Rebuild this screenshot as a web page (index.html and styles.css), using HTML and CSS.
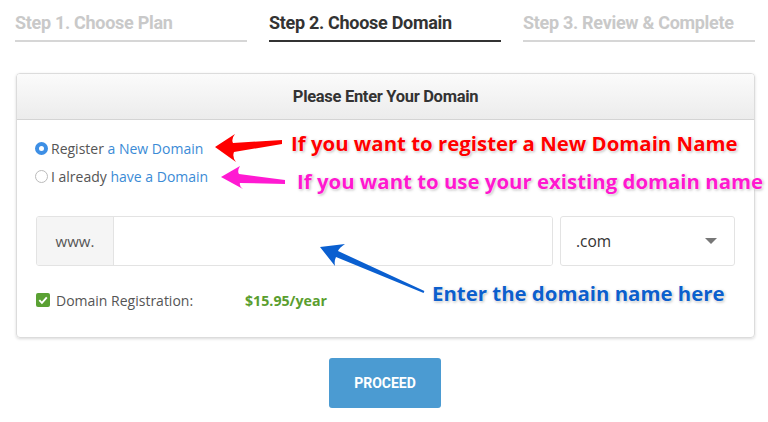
FILE: index.html
```html
<!DOCTYPE html>
<html>
<head>
<meta charset="utf-8">
<link rel="stylesheet" href="styles.css">
</head>
<body>
<div class="page">
  <div class="steps">
    <div class="step">Step 1. Choose Plan</div>
    <div class="step active">Step 2. Choose Domain</div>
    <div class="step">Step 3. Review &amp; Complete</div>
  </div>

  <div class="card">
    <div class="card-head">Please Enter Your Domain</div>
    <div class="card-body">
      <div class="options">
        <label class="opt"><span class="radio checked"></span>Register <span class="link">a New Domain</span></label>
        <label class="opt"><span class="radio"></span>I already <span class="link">have a Domain</span></label>
      </div>
      <div class="domain-row">
        <div class="input-group">
          <span class="addon">www.</span>
          <span class="field"></span>
        </div>
        <div class="select">
          <span>.com</span>
          <span class="caret"></span>
        </div>
      </div>
      <div class="reg-row">
        <svg class="check" width="14" height="14" viewBox="0 0 14 14"><rect width="14" height="14" rx="2" fill="#5aa133"/><polyline points="3.3,7.2 5.9,9.8 10.8,4.3" fill="none" stroke="#fff" stroke-width="1.9"/></svg>
        <span class="reg-label">Domain Registration:</span>
        <span class="price">$15.95/year</span>
      </div>
    </div>
  </div>

  <div class="actions">
    <button class="proceed">PROCEED</button>
  </div>

  <svg class="arrows" width="768" height="422" viewBox="0 0 768 422">
    <path d="M215,147 L235,134 Q231,139 233,143 L282,140 L282,144 L234,152 Q232,157 236,162 Z" fill="#ff0000"/>
    <path d="M221,177 L240,166 Q237,171 239,174 L285,180 L285,184 L240,183 Q239,186 243,189 Z" fill="#ff1ad2"/>
    <path d="M320,247 L345,244 Q339,248 338,251 L424.4,291 L423.6,293 L336,257 Q334,261 335,266 Z" fill="#0a5fd0"/>
  </svg>
  <div class="note note-red">If you want to register a New Domain Name</div>
  <div class="note note-pink">If you want to use your existing domain name</div>
  <div class="note note-blue">Enter the domain name here</div>
</div>
</body>
</html>
```

FILE: styles.css
```css
* { box-sizing: border-box; }
html, body { margin: 0; padding: 0; background: #fff; }
.page {
  position: relative;
  width: 768px;
  height: 422px;
  overflow: hidden;
  font-family: "Open Sans", "Liberation Sans", sans-serif;
}
.steps {
  display: flex;
  gap: 22px;
  padding: 11px 13px 0 15px;
}
.step {
  flex: 1;
  font-family: Roboto, "Liberation Sans", sans-serif;
  font-weight: 700;
  font-size: 18px;
  letter-spacing: -0.3px;
  line-height: 24px;
  color: #c9c9c9;
  padding-bottom: 5px;
  border-bottom: 2px solid #d6d6d6;
}
.step.active {
  color: #333;
  border-bottom: 2px solid #333;
}
.card {
  margin: 31px 13px 0 16px;
  border: 1px solid #dcdcdc;
  border-radius: 4px;
  box-shadow: 0 1px 3px rgba(0,0,0,0.15);
  overflow: hidden;
}
.card-head {
  height: 46px;
  line-height: 45px;
  text-align: center;
  font-family: Roboto, "Liberation Sans", sans-serif;
  font-weight: 700;
  font-size: 16.5px;
  letter-spacing: -0.3px;
  color: #333;
  background: linear-gradient(#fbfbfb, #ececec);
  border-bottom: 1px solid #d4d4d4;
}
.card-body {
  padding: 14px 19px 27px 18px;
}
.options { display: flex; flex-direction: column; }
.opt {
  display: flex;
  align-items: center;
  height: 28px;
  font-size: 14px;
  color: #555;
  white-space: pre;
}
.link { color: #3b8bd6; }
.radio {
  width: 13px;
  height: 13px;
  border-radius: 50%;
  border: 1px solid #bbb;
  margin-right: 3px;
  background: #fff;
}
.radio.checked {
  border: 4px solid #3d8fe5;
  background: #fff;
}
.domain-row {
  display: flex;
  gap: 7px;
  margin-top: 26px;
  margin-left: 1px;
  height: 50px;
}
.input-group {
  flex: 1;
  display: flex;
  border: 1px solid #e3e3e3;
  border-radius: 3px;
  overflow: hidden;
}
.addon {
  width: 77px;
  background: #f5f5f5;
  border-right: 1px solid #e3e3e3;
  display: flex;
  align-items: center;
  justify-content: center;
  font-size: 15px;
  color: #555;
}
.field { flex: 1; background: #fff; }
.select {
  width: 175px;
  border: 1px solid #e3e3e3;
  border-radius: 3px;
  display: flex;
  align-items: center;
  justify-content: space-between;
  padding: 0 17px 0 15px;
  font-size: 15.5px;
  color: #333;
}
.caret {
  width: 0; height: 0;
  border-left: 6px solid transparent;
  border-right: 6px solid transparent;
  border-top: 6px solid #777;
}
.reg-row {
  display: flex;
  align-items: center;
  margin-top: 24px;
  margin-left: 1px;
  height: 20px;
  font-size: 14px;
}
.check { margin-right: 6px; }
.reg-label { color: #555; width: 189px; }
.price { color: #5a9e2f; font-weight: 700; font-size: 14.2px; }
.actions {
  display: flex;
  justify-content: center;
  padding-top: 20px;
  padding-left: 2px;
}
.proceed {
  width: 112px;
  height: 50px;
  border: none;
  border-radius: 3px;
  background: #4b9bd2;
  color: #fff;
  font-family: Roboto, "Liberation Sans", sans-serif;
  font-weight: 700;
  font-size: 14px;
}
.arrows { position: absolute; left: 0; top: 0; pointer-events: none; }
.note {
  position: absolute;
  font-family: "Open Sans", "Liberation Sans", sans-serif;
  font-weight: 700;
  font-size: 20.4px;
  line-height: 24px;
  white-space: nowrap;
  text-shadow: 0 0 2px #fff, 0 0 2px #fff, 1px 1px 3px rgba(0,0,0,0.35);
}
.note-red { left: 291px; top: 131px; color: #ff0000; }
.note-pink { left: 297px; top: 169px; color: #ff18cf; }
.note-blue { left: 432px; top: 281px; color: #0c5fcc; }
```
